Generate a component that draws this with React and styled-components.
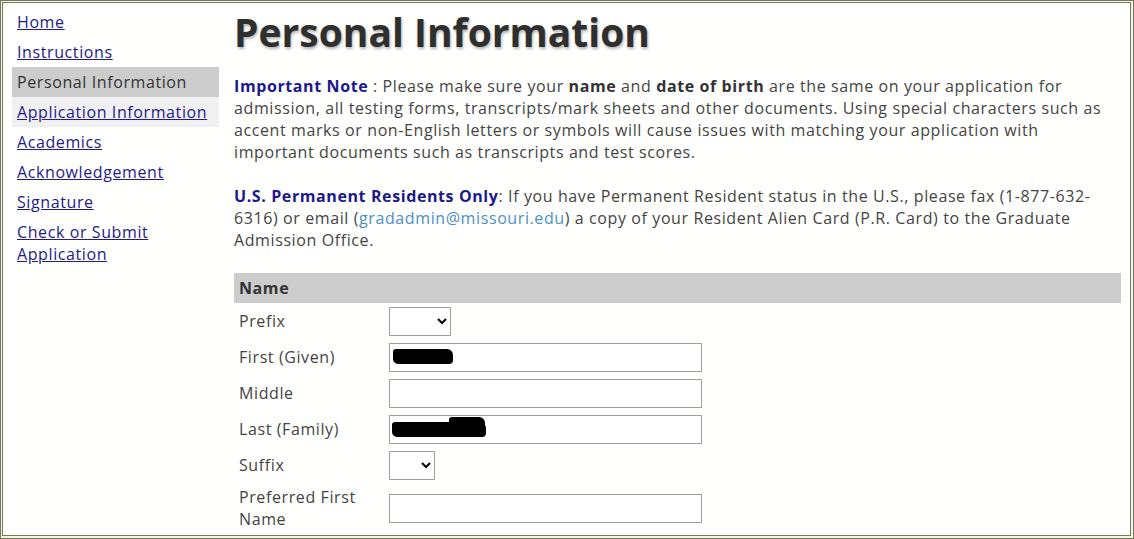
import React from "react";
import styled, { createGlobalStyle } from "styled-components";

const GlobalStyle = createGlobalStyle`
  html, body {
    margin: 0;
    padding: 0;
    background: #ffffff;
  }
  body {
    font-family: "Open Sans", "Noto Sans", sans-serif;
    color: #3c3c3c;
  }
`;

const navItems = [
  { label: "Home" },
  { label: "Instructions" },
  { label: "Personal Information", current: true },
  { label: "Application Information", hover: true },
  { label: "Academics" },
  { label: "Acknowledgement" },
  { label: "Signature" },
  { label: "Check or Submit Application" },
];

const nameRows = [
  { label: "Prefix", kind: "select", width: 62 },
  { label: "First (Given)", kind: "input", blot: "first" },
  { label: "Middle", kind: "input" },
  { label: "Last (Family)", kind: "input", blot: "last" },
  { label: "Suffix", kind: "select", width: 46 },
  { label: "Preferred First Name", kind: "input" },
];

function App() {
  return (
    <>
      <GlobalStyle />
      <Frame>
        <Inner>
          <SideNav>
            {navItems.map((item) => (
              <NavItem key={item.label} $current={item.current} $hover={item.hover}>
                {item.current ? item.label : <NavLink href="#">{item.label}</NavLink>}
              </NavItem>
            ))}
          </SideNav>
          <Main>
            <Title>Personal Information</Title>
            <Para>
              <Lead>Important Note</Lead> : Please make sure your <b>name</b> and <b>date of birth</b> are the
              same on your application for admission, all testing forms, transcripts/mark sheets and other
              documents. Using special characters such as accent marks or non-English letters or symbols will
              cause issues with matching your application with important documents such as transcripts and test
              scores.
            </Para>
            <Para>
              <Lead>U.S. Permanent Residents Only</Lead>: If you have Permanent Resident status in the U.S., please
              fax (1-877-632-6316) or email (<Mail href="#">gradadmin@missouri.edu</Mail>) a copy of your Resident
              Alien Card (P.R. Card) to the Graduate Admission Office.
            </Para>
            <SectionBar>Name</SectionBar>
            {nameRows.map((row) => (
              <FormRow key={row.label}>
                <Label>{row.label}</Label>
                <Field>
                  {row.kind === "select" ? (
                    <Select style={{ width: row.width }}>
                      <option value=""></option>
                    </Select>
                  ) : (
                    <InputWrap>
                      <TextInput type="text" />
                      {row.blot === "first" && <Blot $w={60} $h={15} $l={4} $t={6} />}
                      {row.blot === "last" && (
                        <>
                          <Blot $w={94} $h={15} $l={3} $t={7} />
                          <Blot $w={36} $h={15} $l={60} $t={2} />
                        </>
                      )}
                    </InputWrap>
                  )}
                </Field>
              </FormRow>
            ))}
          </Main>
        </Inner>
      </Frame>
    </>
  );
}

export default App;

const Frame = styled.div`
  width: 1134px;
  height: 539px;
  box-sizing: border-box;
  border: 1px solid #77775a;
  padding: 1px 2px 2px 1px;
  background: #f4f4ea;
  overflow: hidden;
`;

const Inner = styled.div`
  height: 100%;
  box-sizing: border-box;
  border: 1px solid #77775a;
  background: #fffffd;
  display: flex;
  align-items: flex-start;
  padding: 4px 0 0 9px;
  overflow: hidden;
`;

const SideNav = styled.nav`
  width: 207px;
  flex-shrink: 0;
  display: flex;
  flex-direction: column;
`;

const NavItem = styled.div`
  padding: 4px 5px;
  font-size: 16px;
  line-height: 22px;
  letter-spacing: 0.6px;
  background: ${(p) => (p.$current ? "#cccccc" : p.$hover ? "#f0f0f0" : "transparent")};
  color: #333333;
`;

const NavLink = styled.a`
  color: #241a8c;
  text-decoration: underline;
`;

const Main = styled.main`
  width: 887px;
  margin-left: 15px;
  flex-shrink: 0;
`;

const Title = styled.h1`
  margin: 0 0 18px;
  font-size: 39px;
  line-height: 50px;
  font-weight: 700;
  color: #2f2f2f;
  text-shadow: 1px 2px 3px rgba(0, 0, 0, 0.3);
`;

const Para = styled.p`
  margin: 0 0 22px;
  padding-right: 15px;
  font-size: 16px;
  line-height: 22px;
  letter-spacing: 0.6px;
  color: #444444;
  b {
    color: #333333;
  }
`;

const Lead = styled.strong`
  color: #1c1a8a;
`;

const Mail = styled.a`
  color: #4b8fc4;
  text-decoration: none;
`;

const SectionBar = styled.div`
  background: #cccccc;
  height: 30px;
  line-height: 30px;
  padding-left: 5px;
  font-size: 16px;
  letter-spacing: 0.6px;
  font-weight: 700;
  color: #333333;
`;

const FormRow = styled.div`
  display: grid;
  grid-template-columns: 155px 1fr;
  align-items: center;
  min-height: 36px;
`;

const Label = styled.div`
  padding: 3px 5px;
  font-size: 16px;
  line-height: 22px;
  letter-spacing: 0.6px;
  color: #444444;
`;

const Field = styled.div`
  display: flex;
  align-items: center;
`;

const Select = styled.select`
  height: 29px;
  box-sizing: border-box;
  border: 1px solid #a0a0a0;
  border-radius: 0;
  background: #ffffff;
  font-family: inherit;
  font-size: 14px;
`;

const InputWrap = styled.div`
  position: relative;
  width: 313px;
`;

const TextInput = styled.input`
  width: 100%;
  height: 29px;
  box-sizing: border-box;
  border: 1px solid #a0a0a0;
  background: #ffffff;
  font-family: inherit;
  font-size: 15px;
  display: block;
`;

const Blot = styled.span`
  position: absolute;
  left: ${(p) => p.$l}px;
  top: ${(p) => p.$t}px;
  width: ${(p) => p.$w}px;
  height: ${(p) => p.$h}px;
  background: #000000;
  border-radius: 3px 6px 4px 5px;
`;
